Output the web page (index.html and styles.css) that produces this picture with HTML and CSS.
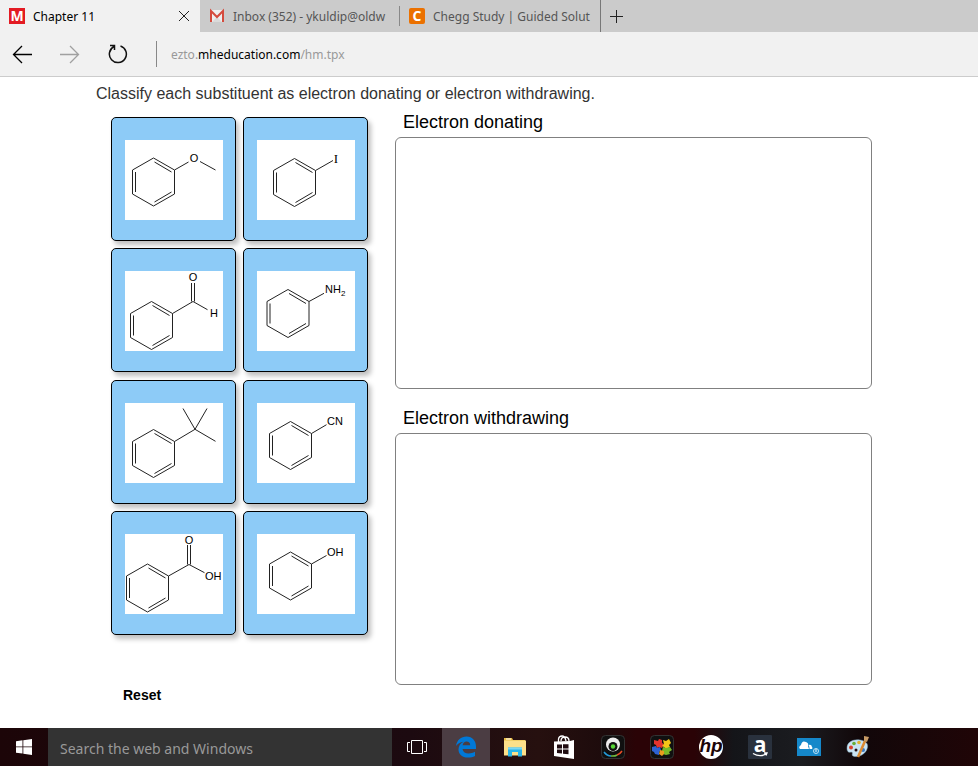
FILE: index.html
```html
<!DOCTYPE html>
<html lang="en">
<head>
    <meta charset="UTF-8">
    <meta name="viewport" content="width=device-width, initial-scale=1.0">
    <title>Chapter 11</title>
    <link rel="stylesheet" href="styles.css">
</head>
<body>
    <!-- shared benzene ring, centred on 0,0 -->
    <svg class="defs" aria-hidden="true">
        <defs>
            <g id="ring">
                <path d="M0 -24L21 -12V12L0 24L-21 12V-12Z"/>
                <path d="M1 -20L18 -10M18 10L1 20M-18 10V-10"/>
            </g>
        </defs>
    </svg>

    <header class="browser">
        <div class="tabs">
            <div class="tab active">
                <svg class="favicon" width="16" height="16" viewBox="0 0 16 16"><path fill="#e31b23" d="M0 0h16v16H0z"/><text x="8" y="13" class="fav-text">M</text></svg>
                <span class="tab-title">Chapter 11</span>
                <button class="tab-close" aria-label="Close tab">
                    <svg width="12" height="12" viewBox="0 0 12 12"><path d="M1 1l10 10M11 1L1 11" stroke="#222" fill="none"/></svg>
                </button>
            </div>
            <div class="tab">
                <svg class="favicon" width="16" height="16" viewBox="0 0 16 16"><path fill="#eee" d="M1 2h14v12H1z"/><path fill="#bbb" d="M3 14l5-5 5 5z" opacity=".4"/><path fill="none" stroke="#d54b3d" stroke-width="2" d="M2 14V3l6 6 6-6v11"/></svg>
                <span class="tab-title">Inbox (352) - ykuldip@oldw</span>
            </div>
            <div class="tab divided">
                <svg class="favicon" width="16" height="16" viewBox="0 0 16 16"><rect width="16" height="16" rx="2" fill="#eb7100"/><text x="8" y="13" class="fav-text">C</text></svg>
                <span class="tab-title">Chegg Study | Guided Solut</span>
            </div>
            <button class="new-tab" aria-label="New tab">
                <svg width="13" height="13" viewBox="0 0 13 13"><path d="M6.500 0v13M0 6.500h13" stroke="#222" fill="none"/></svg>
            </button>
        </div>
        <nav class="toolbar">
            <button aria-label="Back">
                <svg width="20" height="19" viewBox="0 0 20 19"><path d="M10 1L1.500 9.500L10 18M1.500 9.500H20" stroke="#000" stroke-width="1.300" fill="none"/></svg>
            </button>
            <button aria-label="Forward">
                <svg width="20" height="19" viewBox="0 0 20 19"><path d="M10 1L18.500 9.500L10 18M18.500 9.500H0" stroke="#a0a0a0" stroke-width="1.300" fill="none"/></svg>
            </button>
            <button aria-label="Refresh">
                <svg width="20" height="20" viewBox="0 0 20 20"><path d="M12.500 2A8.500 8.500 0 1 1 6 2.500M2 1.500H6.500V6" stroke="#111" stroke-width="1.500" fill="none"/></svg>
            </button>
            <button class="address">ezto.<span class="domain">mheducation.com</span>/hm.tpx</button>
        </nav>
    </header>

    <main class="page">
        <h1>Classify each substituent as electron donating or electron withdrawing.</h1>
        <div class="exercise">
            <section class="source">
                <div class="cards">
                    <button class="card" aria-label="Anisole">
                        <svg class="molecule" viewBox="0 0 98 80">
                            <use href="#ring" x="28.500" y="42"/>
                            <path d="M49.500 30L63.500 22M75 21.500L90.500 30"/>
                            <text x="69" y="22" text-anchor="middle">O</text>
                        </svg>
                    </button>
                    <button class="card" aria-label="Iodobenzene">
                        <svg class="molecule" viewBox="0 0 98 80">
                            <use href="#ring" x="37.500" y="42.500"/>
                            <path d="M58.500 30.500L76 20.500"/>
                            <text x="79" y="23" text-anchor="middle" class="serif">I</text>
                        </svg>
                    </button>
                    <button class="card" aria-label="Benzaldehyde">
                        <svg class="molecule" viewBox="0 0 98 80">
                            <use href="#ring" x="26.500" y="54.500"/>
                            <path d="M47.500 42.500L68 30.500L82.500 38.700M66.500 12V30.500M69.500 12V30.500"/>
                            <text x="68" y="10" text-anchor="middle">O</text>
                            <text x="89" y="46" text-anchor="middle">H</text>
                        </svg>
                    </button>
                    <button class="card" aria-label="Aniline">
                        <svg class="molecule" viewBox="0 0 98 80">
                            <use href="#ring" x="31" y="42.500"/>
                            <path d="M52 30.500L67 22.300"/>
                            <text x="68" y="22">NH<tspan class="sub" dy="3">2</tspan></text>
                        </svg>
                    </button>
                    <button class="card" aria-label="tert-Butylbenzene">
                        <svg class="molecule" viewBox="0 0 98 80">
                            <use href="#ring" x="28.500" y="50.500"/>
                            <path d="M49.500 38.500L70 26.300L90.500 38.300M58 5.500L70 26.300L82 5.500"/>
                        </svg>
                    </button>
                    <button class="card" aria-label="Benzonitrile">
                        <svg class="molecule" viewBox="0 0 98 80">
                            <use href="#ring" x="33.500" y="42.500"/>
                            <path d="M54.500 30.500L69.500 21.700"/>
                            <text x="70" y="22">CN</text>
                        </svg>
                    </button>
                    <button class="card" aria-label="Benzoic acid">
                        <svg class="molecule" viewBox="0 0 98 80">
                            <use href="#ring" x="22.500" y="54"/>
                            <path d="M43.500 42L64 30.500L79.500 38.700M62.500 11V30.500M65.500 11V30.500"/>
                            <text x="64" y="10" text-anchor="middle">O</text>
                            <text x="80" y="46">OH</text>
                        </svg>
                    </button>
                    <button class="card" aria-label="Phenol">
                        <svg class="molecule" viewBox="0 0 98 80">
                            <use href="#ring" x="33.500" y="42"/>
                            <path d="M54.500 30L69.500 21.500"/>
                            <text x="70" y="22">OH</text>
                        </svg>
                    </button>
                </div>
                <button class="reset">Reset</button>
            </section>
            <div class="targets">
                <section>
                    <h2>Electron donating</h2>
                    <div class="dropzone"></div>
                </section>
                <section>
                    <h2>Electron withdrawing</h2>
                    <div class="dropzone"></div>
                </section>
            </div>
        </div>
    </main>

    <footer class="taskbar">
        <button class="start" aria-label="Start">
            <svg width="16" height="16" viewBox="0 0 16 16"><path fill="#fff" d="M0 2.200l6.500-.9v6.200H0zM7.300 1.200L16 0v7.500H7.300zM0 8.300h6.500v6.300L0 13.700zM7.300 8.300H16V16l-8.700-1.200z"/></svg>
        </button>
        <input class="search" type="text" placeholder="Search the web and Windows" aria-label="Search the web and Windows">
        <div class="apps">
            <button aria-label="Task view">
                <svg width="20" height="14" viewBox="0 0 20 14"><path d="M4.500 .5h11v13h-11zM3 2.500H.5v9H3M17 2.500h2.500v9H17" fill="none" stroke="#fff"/></svg>
            </button>
            <button class="current" aria-label="Edge">
                <svg width="22" height="22" viewBox="0 0 22 22"><path fill="#0078d7" d="M1 10C2 4 6 .5 11.500 .5C17.500 .5 21 5 21 10.500V13H7.500C8 16 10.500 17.500 13.500 17.500C16 17.500 18 17 20 15.800V20C18 21.200 15.500 21.600 13 21.600C7 21.600 3.500 18 3.500 13.500C3.500 10 5.500 7.200 8.500 5.800C5 6 2.500 8 1 10zM7.600 9.200H15.200C15.200 6.800 13.800 5.500 11.600 5.500C9.500 5.500 8 7 7.600 9.200z"/></svg>
            </button>
            <button aria-label="File Explorer">
                <svg width="22" height="20" viewBox="0 0 22 20"><path fill="#e8bd45" d="M0 1h8l1 2h12v4H0z"/><path fill="#fff" d="M2 1.500h5v1H2z"/><path fill="#fce08a" d="M0 3.500h22v15H0z"/><path fill="#29b6e8" d="M4 10.500h14v9h-4V15H8v4.500H4z"/><path fill="#7bd7f4" d="M4 10.500h14v2H4z"/></svg>
            </button>
            <button aria-label="Store">
                <svg width="22" height="24" viewBox="0 0 22 24"><path fill="#fff" d="M1 6.500l16-.5 4-1v19L1 21z"/><path fill="none" stroke="#fff" stroke-width="1.300" d="M5.500 7V4Q6 1 9 1T13 6M8 6Q8 2 12 2T16 6"/><path fill="#200c10" d="M4 9.500h5v4H4zM10 9.300h5.500v4.200H10zM4 14.500h5v4l-5-.4zM10 14.500h5.500v4.800l-5.500-.6z"/></svg>
            </button>
            <button aria-label="Webcam">
                <svg width="24" height="24" viewBox="0 0 24 24"><rect x=".5" y=".5" width="23" height="23" rx="4" fill="#101010" stroke="#333"/><circle cx="12" cy="9.500" r="7" fill="#ededed"/><circle cx="12" cy="11.500" r="4.500" fill="#111"/><circle cx="12" cy="11.500" r="2.200" fill="#57d536"/><path d="M3 17q3 4 7 4" stroke="#249bd8" stroke-width="1.500" fill="none"/><path d="M10 21q4 .3 6-1" stroke="#70bd40" stroke-width="1.500" fill="none"/><path d="M16 20q3-1 5-4" stroke="#ed4b26" stroke-width="1.500" fill="none"/></svg>
            </button>
            <button aria-label="Puzzle">
                <svg width="24" height="24" viewBox="0 0 24 24"><rect x=".5" y=".5" width="23" height="23" rx="4" fill="#101010" stroke="#333"/><path fill="#e3342f" d="M4 5l4 1 1-2 3 1v3l2 1-2 4-3-1-2 1-1-3-2-1z"/><path fill="#f5c518" d="M13 5l3 1 3-2 2 4-2 2 1 2-4 2-2-2-2-1 2-2z"/><path fill="#2d62d3" d="M2 12l4-1 1 2 3-1 1 3-2 2v3l-4-1-1-2-2-1z"/><path fill="#79b928" d="M13 12l3 1 4-1 2 3-3 2 1 2-4 1-3-1-1-3z"/><path fill="#e89c1e" d="M10 15l4 1v3l-2 2-3-2z"/></svg>
            </button>
            <button aria-label="HP">
                <svg width="24" height="24" viewBox="0 0 24 24"><circle cx="12" cy="12" r="12" fill="#fff"/><text x="12" y="17" class="hp-text">hp</text></svg>
            </button>
            <button aria-label="Amazon">
                <svg width="24" height="24" viewBox="0 0 24 24"><rect width="24" height="24" rx="1" fill="#29313d"/><text x="12" y="17" class="amazon-text">a</text><path d="M5 18.500q7 4 13 .5M16 18h3l-1 2.500" stroke="#fff" stroke-width="1.300" fill="none"/></svg>
            </button>
            <button aria-label="Cloud backup">
                <svg width="24" height="18" viewBox="0 0 24 18"><path fill="#1588ca" d="M0 0h24v18H0z"/><path fill="#fff" d="M3 11Q1 9 4 7Q5 2 9 4Q12 5 11 8L12 11zM12.500 11q0-3-1-4q3-1 3.500 2q1 1 0 2z"/><circle cx="19" cy="13" r="2.500" fill="none" stroke="#bfe2f5"/><path d="M19 11v3" stroke="#fff"/></svg>
            </button>
            <button aria-label="Paint">
                <svg width="24" height="24" viewBox="0 0 24 24"><path fill="#c9e3f2" stroke="#86aec6" stroke-width=".5" d="M1 13C1 7 7 4 14 5C20 6 23 9 21 14C19 20 11 23 7 21C5 20 8 17 5 17C2 18 1 16 1 13z"/><circle cx="5" cy="12.500" r="2" fill="#d9412b"/><circle cx="8" cy="8.500" r="1.800" fill="#68ad36"/><circle cx="13" cy="7.500" r="1.800" fill="#e3b32b"/><circle cx="17" cy="15" r="2" fill="#3879c5"/><circle cx="10" cy="15" r="1.500" fill="#261013"/><path d="M19 6L12 22" stroke="#db8a31" stroke-width="2.500"/><path d="M18 1l5 1-2 5-3-1z" fill="#c69a65"/></svg>
            </button>
        </div>
    </footer>
</body>
</html>
```

FILE: styles.css
```css
* {
    box-sizing: border-box;
}
body {
    margin: 0;
    min-height: 100vh;
    display: flex;
    flex-direction: column;
    background: #fff;
    font-family: "Liberation Sans", Arial, sans-serif;
    color: #000;
}
button {
    padding: 0;
    border: none;
    background: none;
    font: inherit;
    color: inherit;
    cursor: pointer;
}
svg {
    display: block;
    flex: none;
}
.defs {
    position: absolute;
    width: 0;
    height: 0;
}

/* browser */
.browser {
    font-family: "Noto Sans", "Open Sans", sans-serif;
    background: #f1f1f1;
    border-bottom: 1px solid #ccc;
}
.tabs {
    display: flex;
    height: 32px;
    background: #cbcbcb;
}
.tab {
    display: flex;
    align-items: center;
    gap: 8px;
    width: 199px;
    padding: 0 9px;
    font-size: 12px;
    color: #555;
}
.tab.active {
    width: 200px;
    padding-right: 10px;
    background: #f1f1f1;
    color: #000;
}
.tab.divided {
    width: 202px;
    padding-left: 10px;
    border-right: 1px solid #777;
    background: linear-gradient(#888, #888) no-repeat 0 6px / 1px 20px;
}
.tab-title {
    flex: 1;
    overflow: hidden;
    white-space: nowrap;
}
.favicon {
    overflow: visible;
}
.fav-text {
    font: bold 14px "Open Sans", sans-serif;
    fill: #fff;
    text-anchor: middle;
}
.new-tab {
    display: grid;
    place-items: center;
    width: 30px;
}
.toolbar {
    display: flex;
    align-items: center;
    gap: 28px;
    height: 44px;
    padding-left: 12px;
}
.address {
    flex: 1;
    height: 26px;
    padding-left: 14px;
    border-left: 1px solid #888;
    text-align: left;
    font-size: 12px;
    color: #999;
}
.domain {
    color: #000;
}

/* exercise */
.page {
    flex: 1;
    padding: 7px 106px 20px 96px;
}
h1 {
    margin: 0;
    font-size: 16px;
    line-height: 20px;
    font-weight: normal;
    color: #333;
}
.exercise {
    display: grid;
    grid-template-columns: 257px 1fr;
    gap: 27px;
    padding: 8px 0 0 15px;
}
.source {
    padding-top: 5px;
}
.cards {
    display: grid;
    grid-template-columns: 125px 125px;
    justify-content: space-between;
    align-content: space-between;
    min-height: 518px;
}
.card {
    height: 124px;
    padding: 22px 12px 20px 13px;
    border: 1px solid #000;
    border-radius: 5px;
    background: #8dcbf7;
    box-shadow: 3px 4px 5px rgba(0, 0, 0, 0.25);
}
.molecule {
    width: 98px;
    height: 80px;
    background: #fff;
    fill: none;
    stroke: #222;
    stroke-width: 1;
}
.molecule text {
    font: 11px "Liberation Sans", Arial, sans-serif;
    fill: #000;
    stroke: none;
}
.molecule .serif {
    font: 13px "Liberation Serif", serif;
}
.molecule .sub {
    font-size: 8px;
}
.reset {
    margin: 51px 0 0 12px;
    font-size: 14px;
    line-height: 18px;
    font-weight: bold;
}
.targets {
    display: flex;
    flex-direction: column;
    gap: 19px;
}
h2 {
    margin: 0;
    padding: 0 8px;
    font-size: 18px;
    line-height: 20px;
    font-weight: normal;
}
.dropzone {
    min-height: 252px;
    margin-top: 5px;
    border: 1px solid #808080;
    border-radius: 6px;
}

/* taskbar */
.taskbar {
    display: flex;
    height: 38px;
    background: linear-gradient(90deg, #1c0508 0, #1c0a10 42%, #26100f 55%, #1d0b0c 62%, #2a0306 65%, #2a0306 71%, #141519 75%, #1b1c20 82%, #110709 88%, #200507 100%);
}
.start {
    display: grid;
    place-items: center;
    width: 48px;
}
.search {
    width: 344px;
    padding: 2px 12px 0;
    border: none;
    background: #333;
    font: 14px "Noto Sans", "Open Sans", sans-serif;
    color: #fff;
}
.search::placeholder {
    color: #999;
    opacity: 1;
}
.apps {
    display: flex;
    gap: 1px;
    padding-left: 1px;
}
.apps button {
    display: grid;
    place-items: center;
    width: 48px;
}
.apps .current {
    background: #4b3d43;
}
.hp-text {
    font: italic bold 19px "Liberation Sans", sans-serif;
    fill: #1c0508;
    text-anchor: middle;
}
.amazon-text {
    font: bold 21px "Open Sans", sans-serif;
    fill: #fff;
    text-anchor: middle;
}
```
